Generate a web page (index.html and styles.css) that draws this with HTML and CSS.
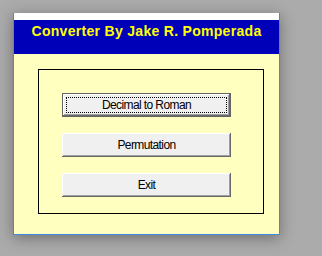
FILE: index.html
```html
<!DOCTYPE html>
<html>
<head>
<meta charset="utf-8">
<link rel="stylesheet" href="styles.css">
</head>
<body>
<div class="window">
  <div class="topstrip"></div>
  <div class="titlebar">Converter By Jake R. Pomperada</div>
  <div class="content">
    <div class="frame">
      <button class="btn default"><span class="focus">Decimal to Roman</span></button>
      <button class="btn"><span class="label">Permutation</span></button>
      <button class="btn"><span class="label">Exit</span></button>
    </div>
  </div>
</div>
</body>
</html>
```
FILE: styles.css
```css
html, body {
  margin: 0;
  padding: 0;
  width: 322px;
  height: 256px;
  background: #ababab;
  overflow: hidden;
}
body {
  padding: 13px 0 0 13px;
  box-sizing: border-box;
}
.window {
  width: 267px;
  height: 222px;
  box-sizing: border-box;
  border: 1px solid #3a8ee0;
  border-top: none;
  background: #ffffc0;
  box-shadow: 0 3px 14px rgba(0,0,0,0.35);
  display: flex;
  flex-direction: column;
}
.topstrip {
  height: 7px;
  background: #ffffff;
}
.titlebar {
  height: 34px;
  background: #0000b8;
  color: #ffff00;
  font-family: "Liberation Sans", Arial, sans-serif;
  font-weight: bold;
  font-size: 14px;
  text-align: center;
  padding-top: 3px;
  box-sizing: border-box;
  letter-spacing: 0.3px;
}
.content {
  flex: 1;
  padding: 15px 0 0 24px;
}
.frame {
  width: 226px;
  height: 145px;
  box-sizing: border-box;
  border: 1px solid #000;
  display: flex;
  flex-direction: column;
  align-items: flex-start;
  padding: 23px 0 0 23px;
  gap: 16px;
}
.btn {
  width: 169px;
  height: 24px;
  margin: 0;
  padding: 0;
  background: #f0f0f0;
  border: none;
  box-shadow: inset -1px -1px 0 #696969, inset 1px 1px 0 #ffffff, inset -2px -2px 0 #a0a0a0;
  font-family: "Liberation Sans", Arial, sans-serif;
  font-size: 12px;
  letter-spacing: -0.6px;
  color: #000;
  display: flex;
  align-items: center;
  justify-content: center;
  box-sizing: border-box;
}
.btn.default {
  border: 1px solid #646464;
  padding: 3px;
}
.focus {
  flex: 1;
  align-self: stretch;
  display: flex;
  align-items: center;
  justify-content: center;
  border: 1px dotted #000;
}
```
